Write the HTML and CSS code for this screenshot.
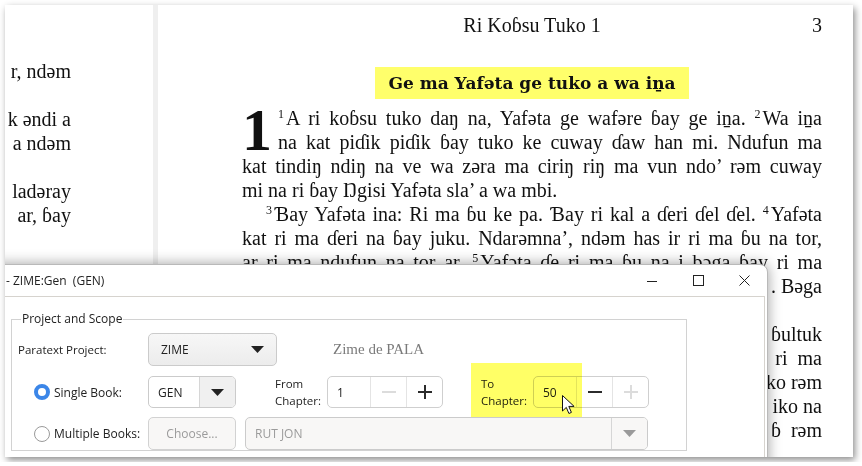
FILE: index.html
```html
<!DOCTYPE html>
<html lang="en">

<head>
  <meta charset="utf-8">
  <meta name="viewport" content="width=device-width, initial-scale=1.0">
  <link rel="stylesheet" href="styles.css">
</head>

<body>

  <div class="shot">

    <div class="book">
      <!-- tail of the previous page -->
      <div class="prev-page">
        <div class="prev-line">r, ndəm</div>
        <div class="prev-line"></div>
        <div class="prev-line">k əndi a</div>
        <div class="prev-line">a ndəm</div>
        <div class="prev-line"></div>
        <div class="prev-line">ladəray</div>
        <div class="prev-line">ar, ɓay</div>
      </div>

      <div class="gutter"></div>

      <div class="page">
        <div class="running-head">
          <span></span>
          <span class="rh-title">Ri Koɓsu Tuko 1</span>
          <span class="rh-num">3</span>
        </div>

        <div class="section-head">Ge ma Yafəta ge tuko a wa iṉa</div>

        <div class="para">
          <span class="drop-cap">1</span>
          <div class="ln"><sup class="v">1</sup>A ri koɓsu tuko daŋ na, Yafəta ge wafəre ɓay ge iṉa. <sup class="v">2</sup>Wa iṉa</div>
          <div class="ln">na kat piɗik piɗik ɓay tuko ke cuway ɗaw han mi. Ndufun ma</div>
          <div class="ln">kat tindiŋ ndiŋ na ve wa zəra ma ciriŋ riŋ ma vun ndo’ rəm cuway</div>
          <div class="ln end">mi na ri ɓay Ŋgisi Yafəta sla’ a wa mbi.</div>
        </div>

        <div class="para">
          <div class="ln first"><sup class="v">3</sup>Ɓay Yafəta ina: Ri ma ɓu ke pa. Ɓay ri kal a ɗeri ɗel ɗel. <sup class="v">4</sup>Yafəta</div>
          <div class="ln">kat ri ma ɗeri na ɓay juku. Ndarəmna’, ndəm has ir ri ma ɓu na tor,</div>
          <div class="ln">ar ri ma ndufun na tor ar. <sup class="v">5</sup>Yafəta ɗe ri ma ɓu na i bəga ɓay ri ma</div>
          <!-- the rest of these lines is behind the dialog -->
          <div class="ln tail">. Bəga</div>
          <div class="ln tail"></div>
          <div class="ln tail">ɓultuk</div>
          <div class="ln tail">ri&nbsp; ma</div>
          <div class="ln tail">ko rəm</div>
          <div class="ln tail">iko na</div>
          <div class="ln tail">ɓ&nbsp; rəm</div>
        </div>
      </div>
    </div>

    <div class="dialog">
      <div class="titlebar">
        <span class="title">- ZIME:Gen&nbsp; (GEN)</span>
        <div class="win-btns">
          <span class="win-btn">
            <svg width="10" height="10" viewBox="0 0 10 10"><path d="M0 5.5h10" stroke="#222" stroke-width="1"/></svg>
          </span>
          <span class="win-btn">
            <svg width="11" height="11" viewBox="0 0 11 11"><rect x="0.5" y="0.5" width="10" height="10" fill="none" stroke="#222" stroke-width="1"/></svg>
          </span>
          <span class="win-btn">
            <svg width="11" height="11" viewBox="0 0 11 11"><path d="M0.5 0.5l10 10M10.5 0.5l-10 10" stroke="#222" stroke-width="1"/></svg>
          </span>
        </div>
      </div>

      <div class="client">
        <fieldset class="group">
          <legend>Project and Scope</legend>

          <div class="row row-project">
            <span class="lbl">Paratext Project:</span>
            <div class="drop-btn">
              <span>ZIME</span>
              <svg width="13" height="7" viewBox="0 0 13 7"><path d="M0 0h13L6.5 7z" fill="#222"/></svg>
            </div>
            <span class="proj-name">Zime de PALA</span>
          </div>

          <div class="row row-single">
            <label class="radio"><span class="dot on"></span>Single Book:</label>
            <div class="combo">
              <span class="combo-val">GEN</span>
              <span class="combo-arrow">
                <svg width="13" height="7" viewBox="0 0 13 7"><path d="M0 0h13L6.5 7z" fill="#222"/></svg>
              </span>
            </div>
            <span class="lbl2 from">From<br>Chapter:</span>
            <div class="spin">
              <span class="spin-val">1</span>
              <span class="spin-btn">
                <svg width="16" height="16" viewBox="0 0 16 16"><path d="M1 8h14" stroke="#dcdcdc" stroke-width="2"/></svg>
              </span>
              <span class="spin-btn">
                <svg width="16" height="16" viewBox="0 0 16 16"><path d="M1 8h14M8 1v14" stroke="#2b2b2b" stroke-width="2"/></svg>
              </span>
            </div>
            <span class="lbl2 to">To<br>Chapter:</span>
            <div class="spin">
              <span class="spin-val">50</span>
              <span class="spin-btn">
                <svg width="16" height="16" viewBox="0 0 16 16"><path d="M1 8h14" stroke="#2b2b2b" stroke-width="2"/></svg>
              </span>
              <span class="spin-btn">
                <svg width="16" height="16" viewBox="0 0 16 16"><path d="M1 8h14M8 1v14" stroke="#dcdcdc" stroke-width="2"/></svg>
              </span>
            </div>
          </div>

          <div class="row row-multi">
            <label class="radio"><span class="dot"></span>Multiple Books:</label>
            <div class="btn-disabled">Choose...</div>
            <div class="combo wide disabled">
              <span class="combo-val">RUT JON</span>
              <span class="combo-arrow">
                <svg width="13" height="7" viewBox="0 0 13 7"><path d="M0 0h13L6.5 7z" fill="#9a9a9a"/></svg>
              </span>
            </div>
          </div>
        </fieldset>
      </div>
    </div>

    <!-- marker highlight laid over the "To Chapter" field -->
    <div class="marker"></div>

    <svg class="cursor" width="13" height="20" viewBox="0 0 13 20">
      <path d="M0.5 0.5v15.5l3.8-3.6 2.6 6.1 2.5-1.1-2.6-6h5.3z" fill="#fff" stroke="#111" stroke-width="1" stroke-linejoin="round"/>
    </svg>

  </div>

</body>

</html>
```

FILE: styles.css
```css
html,
body {
  margin: 0;
  padding: 0;
  background: #fff;
}

body {
  padding: 5px;
}

.shot {
  position: relative;
  width: 848px;
  height: 452px;
  overflow: hidden;
  background: #fff;
  box-shadow: 2px 3px 7px rgba(0, 0, 0, 0.45);
}

/* Book view */

.book {
  display: flex;
  height: 100%;
  font-family: "Liberation Serif", "DejaVu Serif", serif;
  font-size: 20px;
  color: #111;
}

.prev-page {
  width: 66px;
  flex: none;
  padding: 54px 82px 0 0;
  overflow: hidden;
}

.prev-line {
  height: 24px;
  line-height: 24px;
  text-align: right;
  white-space: nowrap;
}

.gutter {
  width: 5px;
  flex: none;
  background: #efefef;
}

.page {
  flex: 1;
  padding: 8px 31px 0 84px;
}

.running-head {
  display: grid;
  grid-template-columns: 1fr auto 1fr;
  height: 24px;
  line-height: 24px;
}

.rh-num {
  justify-self: end;
}

.section-head {
  width: fit-content;
  margin: 30px auto 7px;
  padding: 0 13px;
  height: 32px;
  line-height: 32px;
  background: #ffff6b;
  font-family: "DejaVu Serif", serif;
  font-weight: bold;
  font-size: 17px;
}

.para {
  line-height: 24px;
}

.ln {
  height: 24px;
  text-align: justify;
  text-align-last: justify;
}

.ln.end {
  text-align-last: left;
}

.ln.first {
  padding-left: 24px;
}

.ln.tail {
  text-align: right;
  text-align-last: right;
  white-space: pre;
}

/* two-line chapter number */
.drop-cap {
  float: left;
  font-size: 60px;
  font-weight: bold;
  line-height: 48px;
  height: 48px;
  margin-right: 6px;
}

.v {
  font-size: 12px;
  line-height: 0;
  vertical-align: 7px;
  margin-right: 2px;
}

/* Dialog window */

.dialog {
  position: absolute;
  left: -20px;
  top: 259px;
  width: 783px;
  height: 220px;
  background: #fff;
  border: 1px solid #b9b9b9;
  border-radius: 0 8px 0 0;
  box-sizing: border-box;
  box-shadow: 0 0 14px rgba(0, 0, 0, 0.38);
  font-family: "Open Sans", "Noto Sans", sans-serif;
  font-size: 11.5px;
  color: #222;
}

.titlebar {
  display: flex;
  justify-content: space-between;
  align-items: center;
  height: 31px;
  padding-left: 20px;
}

.title {
  font-size: 12px;
  white-space: pre;
}

.win-btns {
  display: flex;
  height: 100%;
}

.win-btn {
  width: 46px;
  display: flex;
  align-items: center;
  justify-content: center;
}

.client {
  margin: 0 2px;
  border: 1px solid #d6d3ce;
  height: 200px;
}

.group {
  margin: 13px 0 0 22px;
  width: 676px;
  box-sizing: border-box;
  border: 1px solid #d2d2d2;
  padding: 5px 6px 0 6px;
}

.group legend {
  padding: 0 1px;
  margin-left: 3px;
  font-size: 12px;
  line-height: 18px;
  color: #222;
}

.row {
  display: flex;
  align-items: center;
}

.row-project {
  height: 33px;
  margin-bottom: 10px;
}

.row-single {
  height: 32px;
  margin-bottom: 9px;
}

.row-multi {
  height: 33px;
}

.lbl {
  width: 130px;
  flex: none;
}

.drop-btn {
  width: 129px;
  height: 33px;
  box-sizing: border-box;
  border: 1px solid #cbcbcb;
  border-radius: 5px;
  background: linear-gradient(#f7f7f7, #ececec);
  display: flex;
  align-items: center;
  justify-content: space-between;
  padding: 0 12px 0 12px;
  font-size: 12px;
}

.proj-name {
  margin-left: 56px;
  font-family: "Liberation Serif", serif;
  font-size: 15px;
  color: #7a7a7a;
}

.radio {
  width: 130px;
  flex: none;
  box-sizing: border-box;
  padding-left: 16px;
  display: flex;
  align-items: center;
  gap: 4px;
  font-size: 12px;
}

.dot {
  width: 16px;
  height: 16px;
  box-sizing: border-box;
  border-radius: 50%;
  border: 1px solid #9a9a9a;
  background: #fff;
}

.dot.on {
  border: 4px solid #3b86e8;
}

.combo {
  width: 88px;
  height: 32px;
  box-sizing: border-box;
  border: 1px solid #cbcbcb;
  border-radius: 5px;
  display: flex;
  overflow: hidden;
}

.combo-val {
  flex: 1;
  display: flex;
  align-items: center;
  padding-left: 9px;
  font-size: 12px;
}

.combo-arrow {
  width: 35px;
  border-left: 1px solid #d6d6d6;
  background: #f0f0f0;
  display: flex;
  align-items: center;
  justify-content: center;
}

.combo.wide {
  width: 403px;
  height: 33px;
  margin-left: 9px;
}

.combo.disabled {
  background: #f8f7f6;
  color: #9b9b9b;
}

.combo.disabled .combo-arrow {
  background: #f8f7f6;
}

.btn-disabled {
  width: 88px;
  height: 33px;
  box-sizing: border-box;
  border: 1px solid #d2d2d2;
  border-radius: 5px;
  background: #f8f7f6;
  color: #9b9b9b;
  font-size: 12px;
  display: flex;
  align-items: center;
  justify-content: center;
}

.lbl2 {
  width: 52px;
  flex: none;
  line-height: 17px;
}

.lbl2.from {
  margin-left: 39px;
}

.lbl2.to {
  margin-left: 38px;
}

.spin {
  width: 116px;
  height: 32px;
  box-sizing: border-box;
  border: 1px solid #cfcfcf;
  border-radius: 5px;
  display: flex;
}

.spin-val {
  flex: 1;
  display: flex;
  align-items: center;
  padding-left: 9px;
  font-size: 12px;
}

.spin-btn {
  width: 35px;
  border-left: 1px solid #e4e4e4;
  display: flex;
  align-items: center;
  justify-content: center;
}

.marker {
  position: absolute;
  left: 466px;
  top: 358px;
  width: 111px;
  height: 54px;
  background: #ffff66;
  mix-blend-mode: multiply;
}

.cursor {
  position: absolute;
  left: 557px;
  top: 390px;
}
```
